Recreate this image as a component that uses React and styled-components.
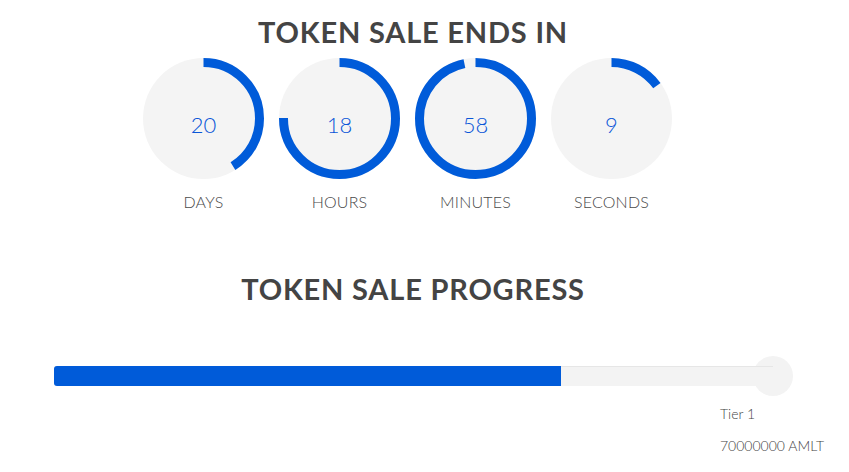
import React from 'react';
import styled, { createGlobalStyle } from 'styled-components';

const GlobalStyle = createGlobalStyle`
  body {
    margin: 0;
    background: #fff;
    font-family: 'Lato', 'Open Sans', sans-serif;
  }
`;

const Page = styled.div`
  width: 849px;
  height: 472px;
  overflow: hidden;
  padding-top: 14px;
  box-sizing: border-box;
`;

const Title = styled.h2`
  margin: 0;
  width: 826px;
  text-align: center;
  font-size: 29px;
  font-weight: 700;
  letter-spacing: 0.8px;
  color: #444;
  line-height: 36px;
`;

const Countdown = styled.div`
  display: flex;
  padding-left: 143px;
  margin-top: 8px;
  gap: 15px;
`;

const Unit = styled.div`
  display: flex;
  flex-direction: column;
  align-items: center;
  width: 121px;
`;

const Dial = styled.svg`
  display: block;
  width: 121px;
  height: 121px;
`;

const Number = styled.text`
  font-family: 'Lato', sans-serif;
  font-size: 22px;
  font-weight: 300;
  fill: #0a56d8;
`;

const Label = styled.div`
  margin-top: 13px;
  font-size: 16px;
  font-weight: 300;
  color: #4a4a4a;
  letter-spacing: 0.2px;
`;

const Progress = styled.div`
  margin-top: 60px;
`;

const BarArea = styled.div`
  display: flex;
  align-items: center;
  padding-left: 54px;
  margin-top: 49px;
`;

const Track = styled.div`
  position: relative;
  width: 719px;
  height: 20px;
  background: #f3f3f3;
  border-top: 1px solid #e6e6e6;
  box-sizing: border-box;
  border-radius: 3px 0 0 3px;
`;

const Fill = styled.div`
  position: absolute;
  left: 0;
  top: -1px;
  bottom: 0;
  background: #005bd9;
  border-radius: 3px 0 0 3px;
`;

const Knob = styled.div`
  width: 40px;
  height: 40px;
  border-radius: 50%;
  background: #f3f3f3;
  margin-left: -20px;
`;

const TierInfo = styled.div`
  padding-left: 720px;
  margin-top: 2px;
  font-size: 14px;
  font-weight: 300;
  color: #444;
  line-height: 32px;
  white-space: nowrap;
`;

const R = 56;
const C = 2 * Math.PI * R;

const units = [
  { value: 20, label: 'DAYS', frac: 148 / 360 },
  { value: 18, label: 'HOURS', frac: 18 / 24 },
  { value: 58, label: 'MINUTES', frac: 58 / 60 },
  { value: 9, label: 'SECONDS', frac: 9 / 60 },
];

const Ring = ({ value, frac }) => (
  <Dial viewBox="0 0 121 121">
    <circle cx="60.5" cy="60.5" r="60.5" fill="#f4f4f4" />
    <circle
      cx="60.5"
      cy="60.5"
      r={R}
      fill="none"
      stroke="#005bd9"
      strokeWidth="9"
      strokeDasharray={`${C * frac} ${C}`}
      transform="rotate(-90 60.5 60.5)"
    />
    <Number x="60.5" y="75" textAnchor="middle">{value}</Number>
  </Dial>
);

export default function App() {
  return (
    <Page>
      <GlobalStyle />
      <Title>TOKEN SALE ENDS IN</Title>
      <Countdown>
        {units.map(u => (
          <Unit key={u.label}>
            <Ring value={u.value} frac={u.frac} />
            <Label>{u.label}</Label>
          </Unit>
        ))}
      </Countdown>
      <Progress>
        <Title>TOKEN SALE PROGRESS</Title>
        <BarArea>
          <Track>
            <Fill style={{ width: `${(507 / 719) * 100}%` }} />
          </Track>
          <Knob />
        </BarArea>
        <TierInfo>
          <div>Tier 1</div>
          <div>70000000 AMLT</div>
        </TierInfo>
      </Progress>
    </Page>
  );
}
